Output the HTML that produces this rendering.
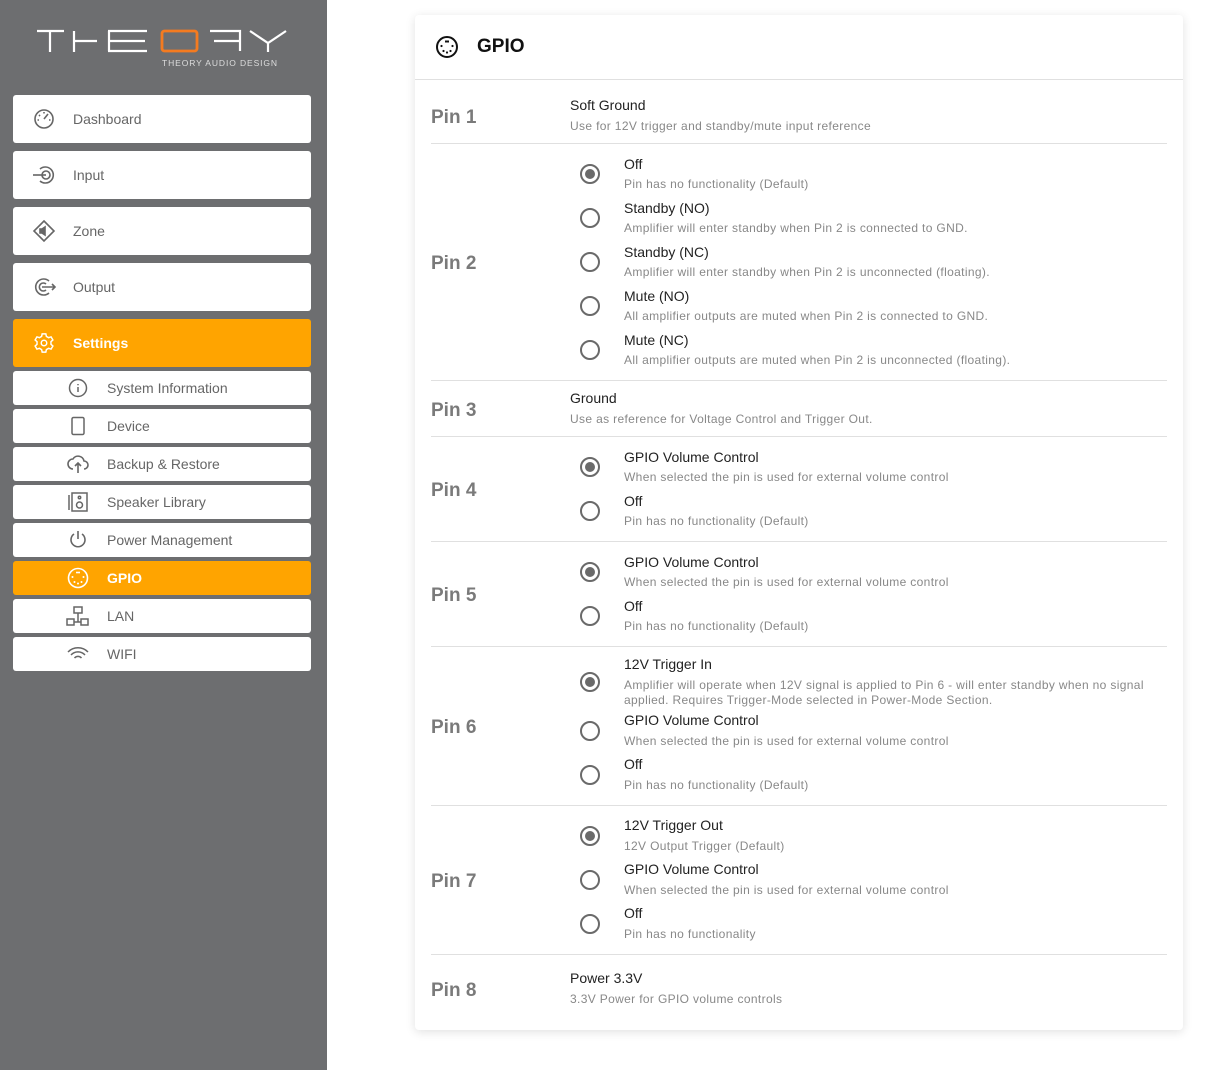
<!DOCTYPE html>
<html><head><meta charset="utf-8"><style>
*{box-sizing:border-box;margin:0;padding:0}
body{width:1229px;height:1070px;position:relative;background:#fff;font-family:"Liberation Sans",sans-serif;overflow:hidden}
#side{position:absolute;left:0;top:0;width:327px;height:1070px;background:#6d6e70}
.btn{position:absolute;left:13px;width:298px;background:#fff;border-radius:3px;color:#666;font-size:14px}
.btn.big{height:48px;line-height:48px}
.btn.sm{height:34px;line-height:34px}
.btn.on{background:#ffa400;color:#fff;font-weight:bold}
.btn .ic{position:absolute;top:50%;transform:translate(-50%,-50%)}
.btn.big .ic{left:31px}.btn.big span{position:absolute;left:60px}
.btn.sm .ic{left:65px}.btn.sm span{position:absolute;left:94px}
#card{position:absolute;left:415px;top:15px;width:768px;height:1015px;background:#fff;border-radius:4px;box-shadow:0 2px 10px rgba(0,0,0,.12)}
.a{position:absolute;white-space:nowrap}
.pin{font-size:19px;color:#7a7a7a;left:431px;font-weight:bold;margin-top:2px}
.t{font-size:14px;color:#222;line-height:16px}
.d{font-size:12px;color:#888;line-height:15px;letter-spacing:.35px}
.hr{position:absolute;left:431px;width:736px;height:1px;background:#e0e0e0}
.r{position:absolute;left:580px;width:20px;height:20px;border:2px solid #6a6a6a;border-radius:50%}
.r.s::after{content:"";position:absolute;left:3px;top:3px;width:10px;height:10px;border-radius:50%;background:#6a6a6a}
</style></head><body>
<div id="side">
<svg class="a" style="left:30px;top:26px" width="264" height="30" viewBox="30 26 264 30" fill="none" stroke="#fff" stroke-width="2.2">
<path d="M37 31H64M50 31V52"/><path d="M74 31V52M74 41H97"/><path d="M108 31H147M109 31V51M109 41H145M108 51H147"/>
<rect x="162" y="31" width="35" height="20" rx="2.5" stroke="#f47b20" stroke-width="2.8"/>
<path d="M210 31H240V41H214M240 41V51"/><path d="M250 31L268 43L286 31M268 43V52"/>
</svg>
<div class="a" style="left:162px;top:58px;font-size:8.5px;color:#ddd;letter-spacing:.9px">THEORY AUDIO DESIGN</div>

<div class="btn big" style="top:95px"><svg class="ic" width="22" height="22" viewBox="0 0 22 22" fill="none" stroke="#666" stroke-width="1.6"><circle cx="11" cy="11" r="9"/><path d="M11 11l4-5M6 7l1 1M11 4v1.5M16 12h1.5M4.5 12H6"/></svg><span>Dashboard</span></div>
<div class="btn big" style="top:151px"><svg class="ic" width="24" height="22" viewBox="0 0 24 22" fill="none" stroke="#666" stroke-width="1.6"><path d="M8 5a8 8 0 1 1 0 12"/><circle cx="14" cy="11" r="4"/><path d="M1 11h13"/></svg><span>Input</span></div>
<div class="btn big" style="top:207px"><svg class="ic" width="24" height="24" viewBox="0 0 24 24" fill="none" stroke="#666" stroke-width="1.6"><path d="M12 2l10 10-10 10L2 12z"/><path d="M8 10h2l3-2v8l-3-2H8z" fill="#666"/></svg><span>Zone</span></div>
<div class="btn big" style="top:263px"><svg class="ic" width="26" height="22" viewBox="0 0 26 22" fill="none" stroke="#666" stroke-width="1.6"><path d="M18 5a8 8 0 1 0 0 12"/><path d="M15 8a4 4 0 1 0 0 6"/><path d="M11 11h13M21 8l3 3-3 3"/></svg><span>Output</span></div>
<div class="btn big on" style="top:319px"><svg class="ic" width="22" height="22" viewBox="0 0 24 24" fill="none" stroke="#fff" stroke-width="1.6"><circle cx="12" cy="12" r="3"/><path d="M10 2h4l.6 2.8 2.4 1.4 2.7-.9 2 3.4-2.1 1.9v2.8l2.1 1.9-2 3.4-2.7-.9-2.4 1.4L14 22h-4l-.6-2.8-2.4-1.4-2.7.9-2-3.4 2.1-1.9v-2.8L2.3 8.7l2-3.4 2.7.9 2.4-1.4z"/></svg><span>Settings</span></div>

<div class="btn sm" style="top:371px"><svg class="ic" width="20" height="20" viewBox="0 0 20 20" fill="none" stroke="#666" stroke-width="1.5"><circle cx="10" cy="10" r="8.5"/><path d="M10 9v5M10 6v1.2"/></svg><span>System Information</span></div>
<div class="btn sm" style="top:409px"><svg class="ic" width="16" height="20" viewBox="0 0 16 20" fill="none" stroke="#666" stroke-width="1.5"><rect x="2" y="1.5" width="12" height="17" rx="1.5"/></svg><span>Device</span></div>
<div class="btn sm" style="top:447px"><svg class="ic" width="22" height="20" viewBox="0 0 22 20" fill="none" stroke="#666" stroke-width="1.6"><path d="M6 15a5 5 0 0 1 0-10 6 6 0 0 1 11 2 4 4 0 0 1 0 8"/><path d="M11 19V9M8 12l3-3 3 3"/></svg><span>Backup &amp; Restore</span></div>
<div class="btn sm" style="top:485px"><svg class="ic" width="22" height="20" viewBox="0 0 22 20" fill="none" stroke="#666" stroke-width="1.5"><rect x="5" y="1" width="15" height="18"/><path d="M2 3v15"/><circle cx="12.5" cy="13" r="3"/><circle cx="12.5" cy="5.5" r="1.2"/></svg><span>Speaker Library</span></div>
<div class="btn sm" style="top:523px"><svg class="ic" width="20" height="20" viewBox="0 0 20 20" fill="none" stroke="#666" stroke-width="1.6"><path d="M10 1v8M6 4a7 7 0 1 0 8 0"/></svg><span>Power Management</span></div>
<div class="btn sm on" style="top:561px"><svg class="ic" width="22" height="22" viewBox="0 0 22 22" fill="none" stroke="#fff" stroke-width="1.6"><circle cx="11" cy="11" r="9.5"/><path d="M9 5.5h4"/><g fill="#fff" stroke="none"><circle cx="5.5" cy="10" r="1"/><circle cx="16.5" cy="10" r="1"/><circle cx="7.5" cy="15" r="1"/><circle cx="14.5" cy="15" r="1"/><circle cx="11" cy="16.5" r="1"/></g></svg><span>GPIO</span></div>
<div class="btn sm" style="top:599px"><svg class="ic" width="24" height="20" viewBox="0 0 24 20" fill="none" stroke="#666" stroke-width="1.5"><rect x="8" y="1" width="8" height="6"/><rect x="1" y="13" width="7" height="6"/><rect x="15" y="13" width="7" height="6"/><path d="M12 7v9M8 16h7"/></svg><span>LAN</span></div>
<div class="btn sm" style="top:637px"><svg class="ic" width="22" height="14" viewBox="0 0 22 14" fill="none" stroke="#666" stroke-width="1.5"><path d="M1 5a14 14 0 0 1 20 0M4 8a9.5 9.5 0 0 1 14 0M7.5 11a4.5 4.5 0 0 1 7 0"/></svg><span>WIFI</span></div>
</div>

<div id="card"></div>
<svg class="a" style="left:435px;top:35px" width="24" height="24" viewBox="0 0 24 24" fill="none" stroke="#111" stroke-width="2"><circle cx="12" cy="12" r="10"/><path d="M10 6.5h4"/><g fill="#111" stroke="none"><circle cx="6.5" cy="11" r="1.1"/><circle cx="17.5" cy="11" r="1.1"/><circle cx="8.5" cy="16" r="1.1"/><circle cx="15.5" cy="16" r="1.1"/><circle cx="12" cy="17.5" r="1.1"/></g></svg>
<div class="a" style="left:477px;top:36px;font-size:19px;font-weight:bold;color:#111">GPIO</div>
<div class="a" style="left:415px;top:79px;width:768px;height:1px;background:#e0e0e0"></div>

<div class="a pin" style="top:105px">Pin 1</div>
<div class="a t" style="left:570px;top:97px">Soft Ground</div>
<div class="a d" style="left:570px;top:119px">Use for 12V trigger and standby/mute input reference</div>
<div class="hr" style="top:143px"></div>

<div class="a pin" style="top:251px">Pin 2</div>
<div class="r s" style="top:164px"></div><div class="a t" style="left:624px;top:156px">Off</div><div class="a d" style="left:624px;top:177px">Pin has no functionality (Default)</div>
<div class="r" style="top:208px"></div><div class="a t" style="left:624px;top:200px">Standby (NO)</div><div class="a d" style="left:624px;top:221px">Amplifier will enter standby when Pin 2 is connected to GND.</div>
<div class="r" style="top:252px"></div><div class="a t" style="left:624px;top:244px">Standby (NC)</div><div class="a d" style="left:624px;top:265px">Amplifier will enter standby when Pin 2 is unconnected (floating).</div>
<div class="r" style="top:296px"></div><div class="a t" style="left:624px;top:288px">Mute (NO)</div><div class="a d" style="left:624px;top:309px">All amplifier outputs are muted when Pin 2 is connected to GND.</div>
<div class="r" style="top:340px"></div><div class="a t" style="left:624px;top:332px">Mute (NC)</div><div class="a d" style="left:624px;top:353px">All amplifier outputs are muted when Pin 2 is unconnected (floating).</div>
<div class="hr" style="top:380px"></div>

<div class="a pin" style="top:398px">Pin 3</div>
<div class="a t" style="left:570px;top:390px">Ground</div>
<div class="a d" style="left:570px;top:412px">Use as reference for Voltage Control and Trigger Out.</div>
<div class="hr" style="top:436px"></div>

<div class="a pin" style="top:478px">Pin 4</div>
<div class="r s" style="top:457px"></div><div class="a t" style="left:624px;top:449px">GPIO Volume Control</div><div class="a d" style="left:624px;top:470px">When selected the pin is used for external volume control</div>
<div class="r" style="top:501px"></div><div class="a t" style="left:624px;top:493px">Off</div><div class="a d" style="left:624px;top:514px">Pin has no functionality (Default)</div>
<div class="hr" style="top:541px"></div>

<div class="a pin" style="top:583px">Pin 5</div>
<div class="r s" style="top:562px"></div><div class="a t" style="left:624px;top:554px">GPIO Volume Control</div><div class="a d" style="left:624px;top:575px">When selected the pin is used for external volume control</div>
<div class="r" style="top:606px"></div><div class="a t" style="left:624px;top:598px">Off</div><div class="a d" style="left:624px;top:619px">Pin has no functionality (Default)</div>
<div class="hr" style="top:646px"></div>

<div class="a pin" style="top:715px">Pin 6</div>
<div class="r s" style="top:672px"></div><div class="a t" style="left:624px;top:656px">12V Trigger In</div><div class="a d" style="left:624px;top:678px;line-height:15px">Amplifier will operate when 12V signal is applied to Pin 6 - will enter standby when no signal<br>applied. Requires Trigger-Mode selected in Power-Mode Section.</div>
<div class="r" style="top:721px"></div><div class="a t" style="left:624px;top:712px">GPIO Volume Control</div><div class="a d" style="left:624px;top:734px">When selected the pin is used for external volume control</div>
<div class="r" style="top:765px"></div><div class="a t" style="left:624px;top:756px">Off</div><div class="a d" style="left:624px;top:778px">Pin has no functionality (Default)</div>
<div class="hr" style="top:805px"></div>

<div class="a pin" style="top:869px">Pin 7</div>
<div class="r s" style="top:826px"></div><div class="a t" style="left:624px;top:817px">12V Trigger Out</div><div class="a d" style="left:624px;top:839px">12V Output Trigger (Default)</div>
<div class="r" style="top:870px"></div><div class="a t" style="left:624px;top:861px">GPIO Volume Control</div><div class="a d" style="left:624px;top:883px">When selected the pin is used for external volume control</div>
<div class="r" style="top:914px"></div><div class="a t" style="left:624px;top:905px">Off</div><div class="a d" style="left:624px;top:927px">Pin has no functionality</div>
<div class="hr" style="top:954px"></div>

<div class="a pin" style="top:978px">Pin 8</div>
<div class="a t" style="left:570px;top:970px">Power 3.3V</div>
<div class="a d" style="left:570px;top:992px">3.3V Power for GPIO volume controls</div>
</body></html>
